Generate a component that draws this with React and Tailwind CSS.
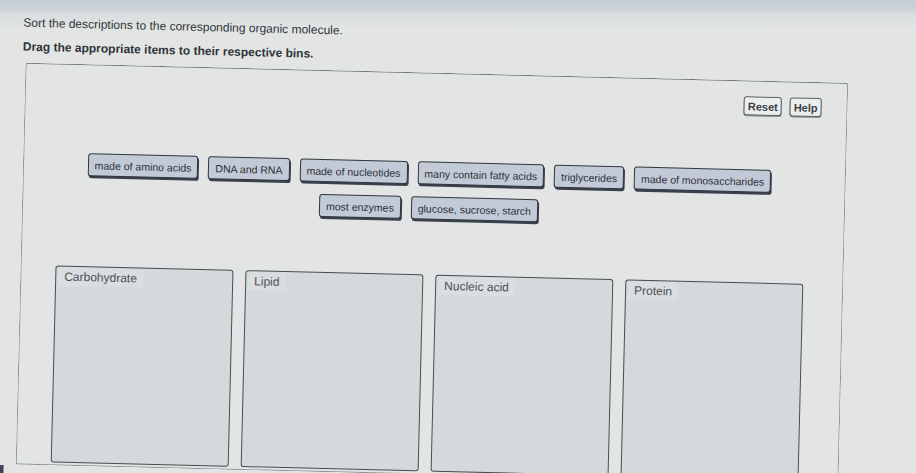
import React from "react";

const chipsRow1 = [
  "made of amino acids",
  "DNA and RNA",
  "made of nucleotides",
  "many contain fatty acids",
  "triglycerides",
  "made of monosaccharides",
];
const chipsRow2 = ["most enzymes", "glucose, sucrose, starch"];
const bins = ["Carbohydrate", "Lipid", "Nucleic acid", "Protein"];

function Chip({ label }) {
  return (
    <div className="h-[23px] px-[6px] flex items-center rounded-[3px] border border-[#30363f] bg-[#c3cad7] shadow-[1px_2px_0_#3a404c] text-[10.5px] leading-[14px] text-[#2a2e36] whitespace-nowrap">
      {label}
    </div>
  );
}

function Bin({ label }) {
  return (
    <div className="w-[178px] h-[197px] rounded-[3px] border-[1.5px] border-[#474d54] bg-[#d4d9dc] flex flex-col items-start">
      <span className="ml-[2px] mt-[1px] px-[6px] py-[1px] bg-[#dadee1] text-[12px] leading-[16px] text-[#4b5057]">
        {label}
      </span>
    </div>
  );
}

function Btn({ children }) {
  return (
    <div className="h-[19px] px-[3px] flex items-center rounded-[3px] border border-[#5a6067] bg-[#eceeee] shadow-[0_1px_0_#8a9095] text-[11px] font-bold leading-[14px] text-[#3a3f46]">
      {children}
    </div>
  );
}

export default function App() {
  return (
    <div
      className="w-[916px] h-[473px] overflow-hidden relative bg-[linear-gradient(to_bottom,#c4ccd4_0px,#cad1d7_8px,#dadedf_14px,#e2e5e4_30px)]"
      style={{ fontFamily: '"Liberation Sans", Arial, sans-serif' }}
    >
      <div className="w-[940px] origin-top-left rotate-[1.4deg] flex flex-col">
        <div className="pt-[14px] pl-[24px] text-[12px] leading-[16px] text-[#30343a]">
          Sort the descriptions to the corresponding organic molecule.
        </div>
        <div className="mt-[8px] pl-[24px] text-[12px] leading-[16px] font-bold text-[#30343a]">
          Drag the appropriate items to their respective bins.
        </div>
        <div className="mt-[8px] ml-[27px] w-[823px] rounded-[3px] border border-[#8d9398] border-t-[#6e7479] pb-[2px] flex flex-col">
          <div className="pt-[15px] pr-[25px] flex justify-end gap-[8px]">
            <Btn>Reset</Btn>
            <Btn>Help</Btn>
          </div>
          <div className="mt-[54px] pr-[10px] flex flex-col items-center gap-[12px]">
            <div className="flex gap-[10px]">
              {chipsRow1.map((c) => (
                <Chip key={c} label={c} />
              ))}
            </div>
            <div className="flex gap-[10px]">
              {chipsRow2.map((c) => (
                <Chip key={c} label={c} />
              ))}
            </div>
          </div>
          <div className="mt-[55px] pr-[5px] flex justify-center gap-[12px]">
            {bins.map((b) => (
              <Bin key={b} label={b} />
            ))}
          </div>
        </div>
        <div className="h-[14px] flex">
          <div className="w-[15px] h-full bg-[#4a3f56]" />
        </div>
      </div>
    </div>
  );
}
